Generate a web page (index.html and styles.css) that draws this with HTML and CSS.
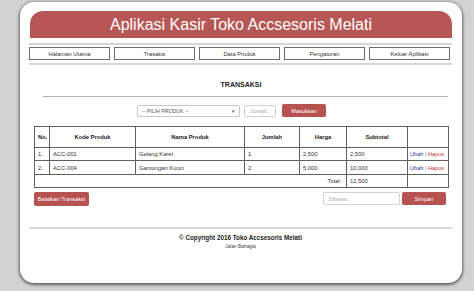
FILE: index.html
```html
<!DOCTYPE html>
<html>
<head>
<meta charset="utf-8">
<link rel="stylesheet" href="styles.css">
</head>
<body>
<div class="panel">
  <div class="header">Aplikasi Kasir Toko Accsesoris Melati</div>
  <div class="rule rule-top"></div>
  <nav class="nav">
    <span class="nav-btn">Halaman Utama</span>
    <span class="nav-btn">Trasaksi</span>
    <span class="nav-btn">Data Produk</span>
    <span class="nav-btn">Pengaturan</span>
    <span class="nav-btn">Keluar Aplikasi</span>
  </nav>
  <div class="rule rule-nav"></div>

  <div class="content">
    <h2 class="title">TRANSAKSI</h2>
    <div class="title-line"></div>
    <div class="form-row">
      <div class="select"><span>-- PILIH PRODUK --</span><span class="caret">▾</span></div>
      <div class="input qty">Jumlah..</div>
      <span class="btn btn-add">Masukkan</span>
    </div>
    <table class="grid">
      <colgroup>
        <col class="c-no"><col class="c-kode"><col class="c-nama"><col class="c-jml"><col class="c-harga"><col class="c-sub"><col class="c-act">
      </colgroup>
      <tr class="head">
        <th>No.</th><th>Kode Produk</th><th>Nama Produk</th><th>Jumlah</th><th>Harga</th><th>Subtotal</th><th></th>
      </tr>
      <tr class="row r1">
        <td>1.</td><td>ACC-001</td><td>Gelang Karet</td><td>1</td><td>2,500</td><td>2,500</td>
        <td class="act"><span class="ubah">Ubah</span> <span class="sep">|</span> <span class="hapus">Hapus</span></td>
      </tr>
      <tr class="row r2">
        <td>2.</td><td>ACC-004</td><td>Gantungan Kunci</td><td>2</td><td>5,000</td><td>10,000</td>
        <td class="act"><span class="ubah">Ubah</span> <span class="sep">|</span> <span class="hapus">Hapus</span></td>
      </tr>
      <tr class="row total">
        <td colspan="5" class="total-label">Total :</td><td>12,500</td><td></td>
      </tr>
    </table>
    <div class="actions">
      <span class="btn btn-cancel">Batalkan Transaksi</span>
      <div class="pay">
        <div class="input paid">Dibayar...</div>
        <span class="btn btn-save">Simpan</span>
      </div>
    </div>
  </div>

  <div class="rule rule-foot"></div>
  <footer class="footer">
    <div class="copy">© Copyright 2016 Toko Accsesoris Melati</div>
    <div class="addr">Jalan Bahagia</div>
  </footer>
</div>
</body>
</html>
```

FILE: styles.css
```css
* { box-sizing: border-box; }
html, body { margin: 0; padding: 0; }
body {
  background: #d2d2d2;
  font-family: "Liberation Sans", Arial, sans-serif;
  width: 474px;
  height: 291px;
  overflow: hidden;
}
.panel {
  margin: 2px 0 0 20px;
  width: 442px;
  height: 281px;
  background: #fff;
  border-radius: 14px;
  box-shadow: 0 1px 3px 1px rgba(0,0,0,0.55);
  padding: 9px 10px 0 9px;
}
.header {
  height: 27px;
  margin-left: 1px;
  background: #b65756;
  border-radius: 13px 13px 0 0;
  color: #fff;
  font-size: 16px;
  line-height: 27px;
  text-align: center;
}
.rule { height: 2px; background: #d6d6d6; }
.rule-top { margin-top: 5px; }
.nav {
  display: flex;
  gap: 4px;
  margin-top: 2px;
}
.nav-btn {
  width: 81px;
  height: 13px;
  border: 1px solid #6d6d6d;
  font-size: 5.8px;
  color: #333;
  display: flex;
  align-items: center;
  justify-content: center;
}
.rule-nav { margin-top: 3px; }

.content { padding: 0 4px 0 5px; }
.title {
  margin: 16px 0 0 0;
  font-size: 7px;
  font-weight: bold;
  text-align: center;
  color: #222;
  line-height: 8px;
}
.title-line {
  margin: 7px 0 0 9px;
  height: 1px;
  background: #b0b0b0;
}
.form-row {
  display: flex;
  align-items: center;
  margin: 7px 0 0 103px;
  height: 13px;
}
.select {
  width: 103px;
  height: 12px;
  border: 1px solid #c8c8c8;
  border-radius: 2px;
  font-size: 5.2px;
  color: #555;
  display: flex;
  align-items: center;
  justify-content: space-between;
  padding: 0 4px;
}
.caret { font-size: 5px; color: #555; }
.input {
  height: 12px;
  border: 1px solid #d2d2d2;
  border-radius: 2px;
  font-size: 5.2px;
  color: #aaa;
  display: flex;
  align-items: center;
  padding: 0 5px;
}
.qty { width: 32px; margin-left: 4px; }
.btn {
  background: #b65250;
  color: #fff;
  border-radius: 2px;
  font-size: 5.6px;
  display: flex;
  align-items: center;
  justify-content: center;
}
.btn-add { width: 44px; height: 13px; margin-left: 6px; }

.grid {
  margin-top: 9px;
  width: 414px;
  border-collapse: collapse;
  table-layout: fixed;
  font-size: 5.8px;
  color: #333;
}
.grid th, .grid td {
  border: 1px solid #5f5f5f;
  padding: 0 3px;
  text-align: left;
  white-space: nowrap;
  overflow: hidden;
}
.grid th { text-align: center; font-weight: bold; color: #222; }
.c-no { width: 15px; }
.c-kode { width: 86px; }
.c-nama { width: 109px; }
.c-jml { width: 55px; }
.c-harga { width: 47px; }
.c-sub { width: 61px; }
.c-act { width: 41px; }
.head { height: 21px; }
.r1 { height: 13px; }
.r2 { height: 14px; }
.total { height: 13px; }
.grid td.total-label { text-align: right; }
.grid td.act { padding: 0 1px 0 2px; font-size: 5.6px; }
.ubah { color: #2b3a9b; }
.sep { color: #888; }
.hapus { color: #c0393b; }

.actions {
  display: flex;
  justify-content: space-between;
  margin-top: 4px;
  padding-right: 2px;
}
.btn-cancel { width: 55px; height: 14px; }
.pay { display: flex; align-items: flex-start; }
.paid { width: 77px; height: 13px; }
.btn-save { width: 44px; height: 13px; margin-left: 2px; }

.rule-foot { margin-top: 21px; }
.footer { text-align: center; margin-top: 5px; }
.copy { font-size: 6.3px; font-weight: bold; color: #222; line-height: 8px; }
.addr { font-size: 4.8px; color: #444; line-height: 7px; margin-top: 1px; }
```
